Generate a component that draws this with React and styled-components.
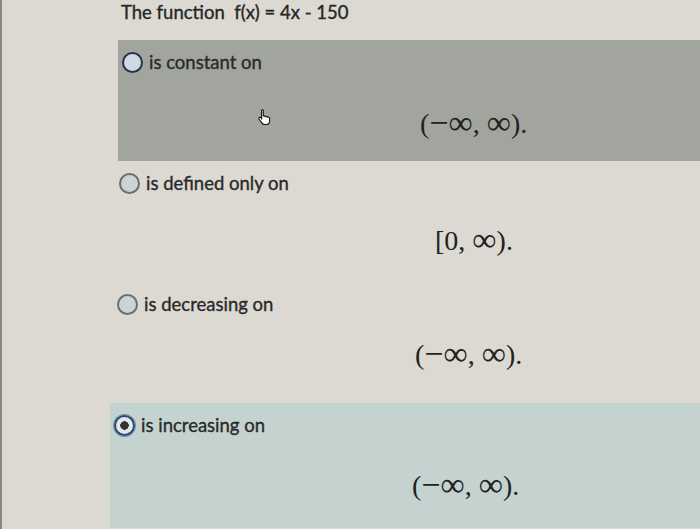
import styled, { createGlobalStyle } from 'styled-components';

const GlobalStyle = createGlobalStyle`
  html, body {
    margin: 0;
    padding: 0;
    background: #dcd9d2;
  }
  body {
    font-family: Lato, 'Open Sans', sans-serif;
    color: #2a2a2a;
  }
`;

const options = [
  { label: 'is constant on', math: '(−∞, ∞).', tone: 'gray', shift: 0, mathTop: 66, ring: '#27324a' },
  { label: 'is defined only on', math: '[0, ∞).', tone: 'none', shift: 3, mathTop: 62, mathShift: 18 },
  { label: 'is decreasing on', math: '(−∞, ∞).', tone: 'none', shift: 5, mathTop: 55 },
  { label: 'is increasing on', math: '(−∞, ∞).', tone: 'blue', shift: 8, mathTop: 65, checked: true },
];

const renderMath = (s) =>
  s.split('').map((ch, i) =>
    ch === '∞' || ch === '−' ? <Sym key={i}>{ch}</Sym> : <span key={i}>{ch}</span>
  );

const App = () => {
  return (
    <>
      <GlobalStyle />
      <Page>
        <Title>The function&nbsp;&nbsp;f(x) = 4x - 150</Title>
        <List>
          {options.map((o, i) => (
            <Option key={i} $tone={o.tone} $shift={o.shift}>
              <OptionHead>
                <Radio $checked={o.checked} $ring={o.ring} />
                <Label>{o.label}</Label>
              </OptionHead>
              <MathExpr $top={o.mathTop} $shift={o.mathShift || 0}>
                {renderMath(o.math)}
              </MathExpr>
              {i === 0 && (
                <Cursor viewBox='0 0 16 18'>
                  <path
                    d='M5 1.5c.8 0 1.3.6 1.3 1.3v5l.6-.1c.7 0 1.2.4 1.3 1 .3-.3.6-.4 1-.4.6 0 1.1.4 1.2 1 .3-.2.6-.3.9-.3.8 0 1.3.6 1.3 1.3v2.6c0 2.1-1.5 3.6-3.6 3.6H7.6c-1.1 0-2-.5-2.6-1.4L2 11c-.4-.6-.2-1.3.3-1.6.5-.3 1.2-.2 1.5.3l.8 1V2.8c0-.7.5-1.3 1.2-1.3z'
                    fill='#fff'
                    stroke='#111'
                    strokeWidth='1.1'
                  />
                </Cursor>
              )}
            </Option>
          ))}
        </List>
      </Page>
    </>
  );
};

export default App;

const Page = styled.div`
  position: relative;
  width: 700px;
  height: 529px;
  overflow: hidden;
  border-left: 2px solid #8a857e;
  box-sizing: border-box;
  padding-left: 116px;
`;

const Title = styled.div`
  height: 40px;
  padding: 1px 0 0 3px;
  box-sizing: border-box;
  font-size: 18.5px;
  line-height: 22px;
  color: #262626;
  -webkit-text-stroke: 0.35px #262626;
`;

const List = styled.div`
  display: flex;
  flex-direction: column;
`;

const Option = styled.div`
  position: relative;
  height: 121px;
  margin-left: ${(p) => -p.$shift}px;
  padding: 10px 0 0 4px;
  box-sizing: border-box;
  background: ${(p) =>
    p.$tone === 'gray' ? '#a2a59e' : p.$tone === 'blue' ? '#c4d3d0' : 'transparent'};
  &:nth-child(4) {
    height: 125px;
  }
`;

const OptionHead = styled.div`
  display: flex;
  align-items: center;
  gap: 6px;
  height: 24px;
`;

const Radio = styled.span`
  width: 17px;
  height: 17px;
  border-radius: 50%;
  border: 2px solid ${(p) => (p.$checked ? '#2c4a68' : p.$ring || '#6a6d70')};
  background: ${(p) =>
    p.$checked
      ? 'radial-gradient(circle, #333 0 4px, #dfe7ea 4.5px)'
      : p.$ring
      ? '#cfd9e2'
      : '#cdd2d2'};
  box-shadow: ${(p) => (p.$checked ? '0 0 0 1px #6f97b5' : 'none')};
`;

const Label = styled.span`
  font-size: 18.5px;
  color: #2a2a2a;
  -webkit-text-stroke: 0.35px #2a2a2a;
`;

const MathExpr = styled.div`
  position: absolute;
  top: ${(p) => p.$top}px;
  left: ${(p) => 302 + p.$shift}px;
  font-family: 'Liberation Serif', 'DejaVu Serif', serif;
  font-size: 28px;
  line-height: 34px;
  color: #222;
  white-space: pre;
`;

const Sym = styled.span`
  font-size: 34px;
  line-height: 1;
  vertical-align: -1px;
`;

const Cursor = styled.svg`
  position: absolute;
  left: 139px;
  top: 68px;
  width: 16px;
  height: 18px;
`;
